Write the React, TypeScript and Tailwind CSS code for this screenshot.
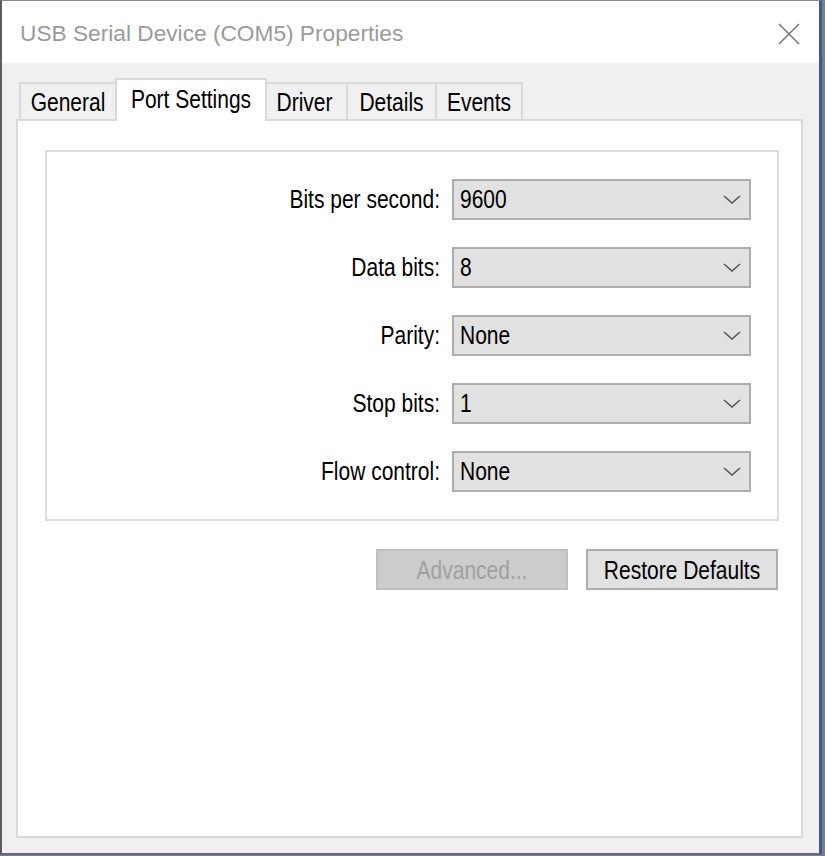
import React from 'react';

const FIELDS = [
  { label: 'Bits per second:', value: '9600' },
  { label: 'Data bits:', value: '8' },
  { label: 'Parity:', value: 'None' },
  { label: 'Stop bits:', value: '1' },
  { label: 'Flow control:', value: 'None' },
];

// the dialog font is drawn a bit taller than Arial at the same width
const Txt: React.FC<{ children: React.ReactNode; className?: string }> = ({ children, className }) => (
  <span className={`inline-block scale-y-120 leading-none ${className ?? ''}`}>{children}</span>
);

const Chevron = () => (
  <svg width="18" height="9" viewBox="0 0 18 9" className="shrink-0">
    <path d="M1 1 L9 8 L17 1" fill="none" stroke="#555" strokeWidth="1.6" />
  </svg>
);

const Combo: React.FC<{ value: string }> = ({ value }) => (
  <div className="w-[299px] h-[41px] bg-[#e1e1e1] border-2 border-[#adadad] flex items-center justify-between pl-[6px] pr-[8px]">
    <Txt className="text-[21px] text-black">{value}</Txt>
    <Chevron />
  </div>
);

const Tab: React.FC<{ label: string; className: string }> = ({ label, className }) => (
  <div className={`h-[37px] bg-[#f1f0f0] border-[#d9d9d9] border-t-2 flex items-center justify-center text-[21px] text-black ${className}`}>
    <Txt>{label}</Txt>
  </div>
);

export default function App() {
  return (
    <div
      className="w-[825px] h-[856px] bg-[#7d7d7d] pr-[3px] pb-[1px]"
      style={{ fontFamily: '"Liberation Sans", Arial, sans-serif' }}
    >
      <div className="h-full flex flex-col bg-[#f1f0f0] border-t border-t-[#8a8a8a] border-l-2 border-l-[#5c5c5c] border-r-[3px] border-r-[#3c5a99] border-b-2 border-b-[#5f6b85]">
        {/* title bar */}
        <div className="h-[62px] bg-white flex items-center justify-between pl-[18px] pr-[19px] pt-[3px]">
          <span className="text-[22.7px] text-[#9a9a9a]">USB Serial Device (COM5) Properties</span>
          <svg width="22" height="22" viewBox="0 0 22 22">
            <path d="M1 1 L21 21 M21 1 L1 21" stroke="#6e6e6e" strokeWidth="1.4" />
          </svg>
        </div>

        {/* body */}
        <div className="flex-1 flex flex-col pl-[14px] pr-[16px] pt-[15px] pb-[15px]">
          <div className="flex items-end pl-[3px] relative z-10">
            <Tab label="General" className="w-[96px] border-l-2" />
            <div className="h-[43px] w-[152px] -mb-[2px] bg-white border-2 border-b-0 border-[#d9d9d9] flex items-center justify-center pb-[5px] text-[21px] text-black">
              <Txt>Port Settings</Txt>
            </div>
            <Tab label="Driver" className="w-[81px] border-r-2 pr-[4px]" />
            <Tab label="Details" className="w-[89px] border-r-2" />
            <Tab label="Events" className="w-[86px] border-r-2" />
          </div>

          <div className="flex-1 bg-white border-2 border-[#d9d9d9] pl-[27px] pr-[22px] pt-[29px]">
            <div className="border-2 border-[#dcdcdc] pt-[27px] pb-[27px] pr-[26px] flex flex-col gap-[27px]">
              {FIELDS.map((f) => (
                <div key={f.label} className="flex items-center justify-end gap-[12px]">
                  <Txt className="text-[21px] text-black">{f.label}</Txt>
                  <Combo value={f.value} />
                </div>
              ))}
            </div>

            <div className="mt-[28px] mr-[1px] flex justify-end gap-[18px]">
              <div className="w-[192px] h-[41px] bg-[#cccccc] border-2 border-[#bfbfbf] flex items-center justify-center text-[21px] text-[#a0a0a0]">
                <Txt>Advanced...</Txt>
              </div>
              <div className="w-[192px] h-[41px] bg-[#e1e1e1] border-2 border-[#adadad] flex items-center justify-center text-[21px] text-black">
                <Txt>Restore Defaults</Txt>
              </div>
            </div>
          </div>
        </div>
      </div>
    </div>
  );
}
